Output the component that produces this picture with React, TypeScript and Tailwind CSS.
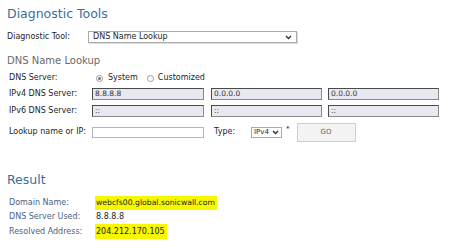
import React from 'react'

const font = { fontFamily: '"DejaVu Sans", Verdana, sans-serif' }

function GrayInput({ value, className = '' }: { value: string; className?: string }) {
  return (
    <div
      className={`h-[12px] border border-[#4a4a4a] border-b-[#8a8a8a] border-r-[#8a8a8a] bg-[#e8e8f1] pl-[2px] text-[7.5px] leading-[10px] text-[#333] ${className}`}
    >
      {value}
    </div>
  )
}

function Radio({ checked }: { checked?: boolean }) {
  return (
    <span className="flex h-[7px] w-[7px] items-center justify-center rounded-full border border-[#9a9a9a] bg-white">
      {checked && <span className="h-[3px] w-[3px] rounded-full bg-[#777]" />}
    </span>
  )
}

function Chevron() {
  return (
    <svg width="7" height="5" viewBox="0 0 7 5">
      <path d="M1 1 L3.5 3.5 L6 1" stroke="#333" strokeWidth="1.4" fill="none" />
    </svg>
  )
}

export default function App() {
  return (
    <div className="h-[248px] w-[474px] overflow-hidden bg-white text-[#1e1e1e]" style={font}>
      <div className="ml-[7px] mt-[7px] flex h-[14px] items-center text-[12.5px] text-[#36709a]">
        Diagnostic Tools
      </div>

      <div className="mt-[10px] flex h-[12px] items-center text-[8px]">
        <span className="ml-[7px] w-[81px]">Diagnostic Tool:</span>
        <div className="flex h-[12px] w-[209px] items-center justify-between border border-[#aaa] bg-white pl-[4px] pr-[4px] shadow-[1px_1px_0_#ddd]">
          <span>DNS Name Lookup</span>
          <Chevron />
        </div>
      </div>

      <div className="ml-[7px] mt-[11px] flex h-[12px] items-center text-[10px] text-[#6a6a6a]">
        DNS Name Lookup
      </div>

      <div className="mt-[6px] flex h-[12px] items-center text-[8px]">
        <span className="ml-[9px] w-[87px]">DNS Server:</span>
        <Radio checked />
        <span className="ml-[5px]">System</span>
        <span className="ml-[9px]">
          <Radio />
        </span>
        <span className="ml-[4px]">Customized</span>
      </div>

      <div className="mt-[4px] flex h-[12px] items-center text-[8px]">
        <span className="ml-[9px] w-[83px]">IPv4 DNS Server:</span>
        <GrayInput value="8.8.8.8" className="w-[112px]" />
        <GrayInput value="0.0.0.0" className="ml-[7px] w-[111px]" />
        <GrayInput value="0.0.0.0" className="ml-[6px] w-[111px]" />
      </div>

      <div className="mt-[5px] flex h-[12px] items-center text-[8px]">
        <span className="ml-[9px] w-[83px]">IPv6 DNS Server:</span>
        <GrayInput value="::" className="w-[112px]" />
        <GrayInput value="::" className="ml-[7px] w-[111px]" />
        <GrayInput value="::" className="ml-[6px] w-[111px]" />
      </div>

      <div className="mt-[5px] flex h-[20px] items-center text-[8px]">
        <span className="ml-[9px] w-[83px]">Lookup name or IP:</span>
        <div className="h-[11px] w-[112px] border border-[#b5b5b5] bg-white" />
        <span className="ml-[10px] w-[37px]">Type:</span>
        <div className="flex h-[11px] w-[31px] items-center justify-between border border-[#aaa] bg-white pl-[2px] pr-[2px] text-[7px]">
          <span>IPv4</span>
          <Chevron />
        </div>
        <span className="ml-[4px] self-start pt-[2px] text-[7px]">*</span>
        <div className="ml-[7px] flex h-[19px] w-[59px] items-center justify-center border border-[#cfcfcf] bg-[#f3f3f3] text-[7px] text-[#666]">
          GO
        </div>
      </div>

      <div className="ml-[7px] mt-[31px] flex h-[14px] items-center text-[12.5px] text-[#36709a]">Result</div>

      <div className="mt-[9px] flex h-[14px] items-center text-[8px]">
        <span className="ml-[9px] w-[86px] text-[#48627f]">Domain Name:</span>
        <span className="flex h-[14px] items-center bg-[#f7f700] pl-[1px] pr-[2px] text-[7.7px] text-[#1e1e1e]">
          webcfs00.global.sonicwall.com
        </span>
      </div>

      <div className="flex h-[14px] items-center text-[8px]">
        <span className="ml-[9px] w-[86px] text-[#48627f]">DNS Server Used:</span>
        <span className="pl-[1px]">8.8.8.8</span>
      </div>

      <div className="flex h-[15px] items-center text-[8px]">
        <span className="ml-[9px] w-[86px] text-[#48627f]">Resolved Address:</span>
        <span className="flex h-[15px] items-center bg-[#f7f700] pl-[1px] pr-[2px] text-[8px] text-[#1e1e1e]">
          204.212.170.105
        </span>
      </div>
    </div>
  )
}
